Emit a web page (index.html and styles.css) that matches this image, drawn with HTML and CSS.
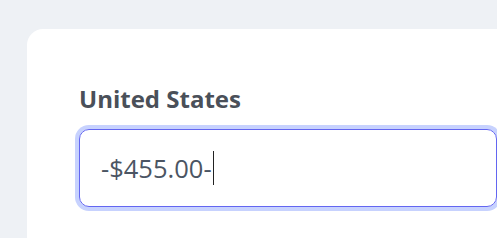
FILE: index.html
```html
<!DOCTYPE html>
<html>
<head>
<meta charset="utf-8">
<link rel="stylesheet" href="styles.css">
</head>
<body>
<div class="card">
  <label class="label">United States</label>
  <div class="input"><span class="value">-$455.00-</span><span class="caret"></span></div>
</div>
</body>
</html>
```
FILE: styles.css
```css
html, body {
  margin: 0;
  height: 100%;
  overflow: hidden;
}
body {
  background: #eef1f5;
  padding: 29px 0 0 27px;
  box-sizing: border-box;
  font-family: "Open Sans", "Noto Sans", sans-serif;
}
.card {
  width: 470px;
  height: 209px;
  background: #ffffff;
  border-radius: 16px 0 0 0;
  padding: 54px 0 0 52px;
  box-sizing: border-box;
}
.label {
  display: block;
  font-size: 24px;
  line-height: 32px;
  font-weight: 700;
  color: #4a5059;
  margin-bottom: 14px;
}
.input {
  width: 418px;
  height: 78px;
  box-sizing: border-box;
  border: 1px solid #6366f1;
  border-radius: 10px;
  box-shadow: 0 0 0 4px #c7d2fe;
  padding: 0 21px;
  display: flex;
  align-items: center;
  font-size: 25.5px;
  color: #4b5563;
}
.caret {
  display: inline-block;
  width: 1px;
  height: 34px;
  background: #222;
  margin-left: 1px;
}
```
